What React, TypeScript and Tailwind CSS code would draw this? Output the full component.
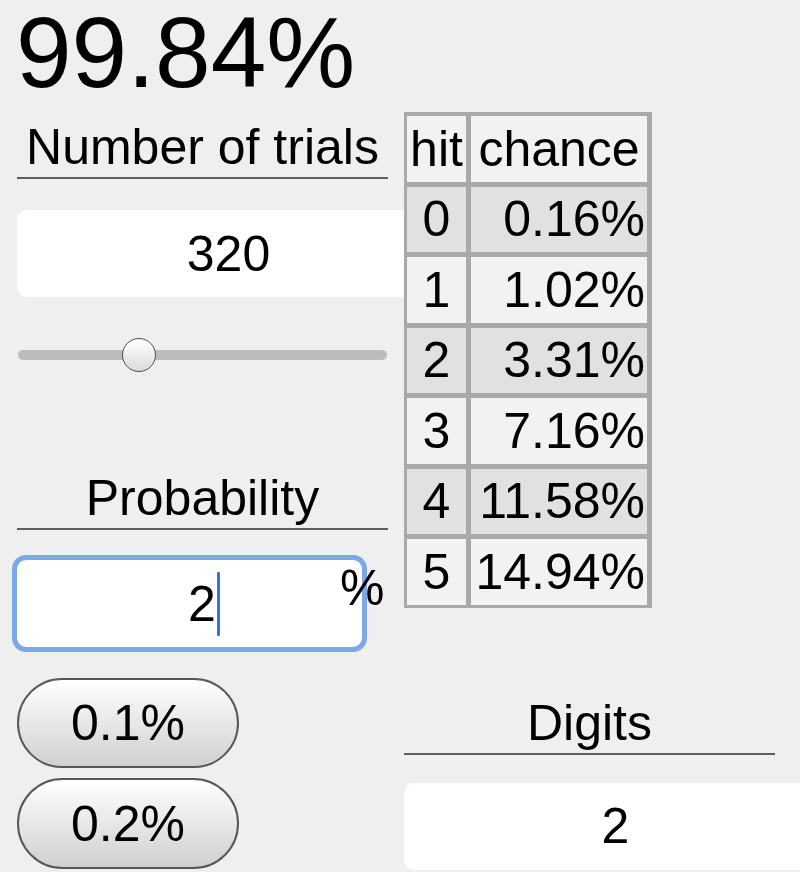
import React from "react";

const rows: [string, string][] = [
  ["0", "0.16%"],
  ["1", "1.02%"],
  ["2", "3.31%"],
  ["3", "7.16%"],
  ["4", "11.58%"],
  ["5", "14.94%"],
];

function Heading({ text, className }: { text: string; className?: string }) {
  return (
    <div
      className={
        "w-[371px] h-[62px] shrink-0 border-b-2 border-[#5e5e5e] text-center text-[50px] leading-[60px] whitespace-nowrap " +
        (className ?? "")
      }
    >
      {text}
    </div>
  );
}

function PillButton({ label, className }: { label: string; className?: string }) {
  return (
    <div
      className={
        "w-[222px] shrink-0 rounded-full border-2 border-[#585858] bg-gradient-to-b from-[#ffffff] to-[#d0d0d0] flex items-center justify-center text-[50px] leading-[50px] " +
        (className ?? "")
      }
    >
      {label}
    </div>
  );
}

export default function App() {
  return (
    <div className="w-[800px] h-[872px] overflow-hidden bg-[#efefef] text-black font-['Liberation_Sans',Arial,Helvetica,sans-serif] flex">
      {/* Left column */}
      <div className="w-[404px] shrink-0 pl-[17px] flex flex-col">
        <div className="ml-[-1px] mt-[2px] h-[100px] text-[100px] leading-[100px] whitespace-nowrap">
          99.84%
        </div>

        <Heading text="Number of trials" className="mt-[15px]" />

        <div className="mt-[31px] w-[423px] h-[87px] shrink-0 bg-white rounded-[10px] flex items-center justify-center text-[50px] leading-[50px]">
          320
        </div>

        <div className="mt-[41px] relative h-[34px] w-[371px] shrink-0">
          <div className="ml-[1px] mt-[12px] w-[369px] h-[10px] rounded-full bg-[#bcbcbc]" />
          <div className="absolute left-[105px] top-0 w-[34px] h-[34px] rounded-full border-[1.5px] border-[#4f4f4f] bg-gradient-to-b from-[#ffffff] to-[#dcdcdc]" />
        </div>

        <Heading text="Probability" className="mt-[96px]" />

        <div className="mt-[25px] ml-[-5px] relative w-[355px] h-[97px] shrink-0 border-[5px] border-[#7ca8ea] rounded-[14px] bg-white flex items-center pl-[171px]">
          <span className="text-[50px] leading-[50px]">2</span>
          <span className="ml-[1px] inline-block w-[3px] h-[64px] rounded-[1px] bg-[#2f72e8]" />
          <span className="absolute left-[323px] top-[3px] text-[50px] leading-[50px]">%</span>
        </div>

        <PillButton label="0.1%" className="mt-[26px] h-[90px]" />
        <PillButton label="0.2%" className="mt-[10px] h-[91px]" />
      </div>

      {/* Right column */}
      <div className="relative z-10 flex flex-col pt-[112px]">
        <div className="w-[248px] bg-[#a9a9a9] pl-[3px] pt-[4px] pr-[5px] pb-[3px] grid grid-cols-[59px_176px] auto-rows-[65.5px] gap-[5px] text-[50px] leading-[50px]">
          <div className="bg-[#f2f2f2] flex items-center justify-center">hit</div>
          <div className="bg-[#f2f2f2] flex items-center justify-center">chance</div>
          {rows.map(([h, c], i) => {
            const bg = i % 2 === 0 ? "bg-[#e1e1e1]" : "bg-[#f2f2f2]";
            return (
              <React.Fragment key={h}>
                <div className={bg + " flex items-center justify-center"}>{h}</div>
                <div className={bg + " flex items-center justify-end pr-[2px]"}>{c}</div>
              </React.Fragment>
            );
          })}
        </div>

        <Heading text="Digits" className="mt-[85px]" />

        <div className="mt-[28px] w-[423px] h-[87px] shrink-0 bg-white rounded-[10px] flex items-center justify-center text-[50px] leading-[50px]">
          2
        </div>
      </div>
    </div>
  );
}
